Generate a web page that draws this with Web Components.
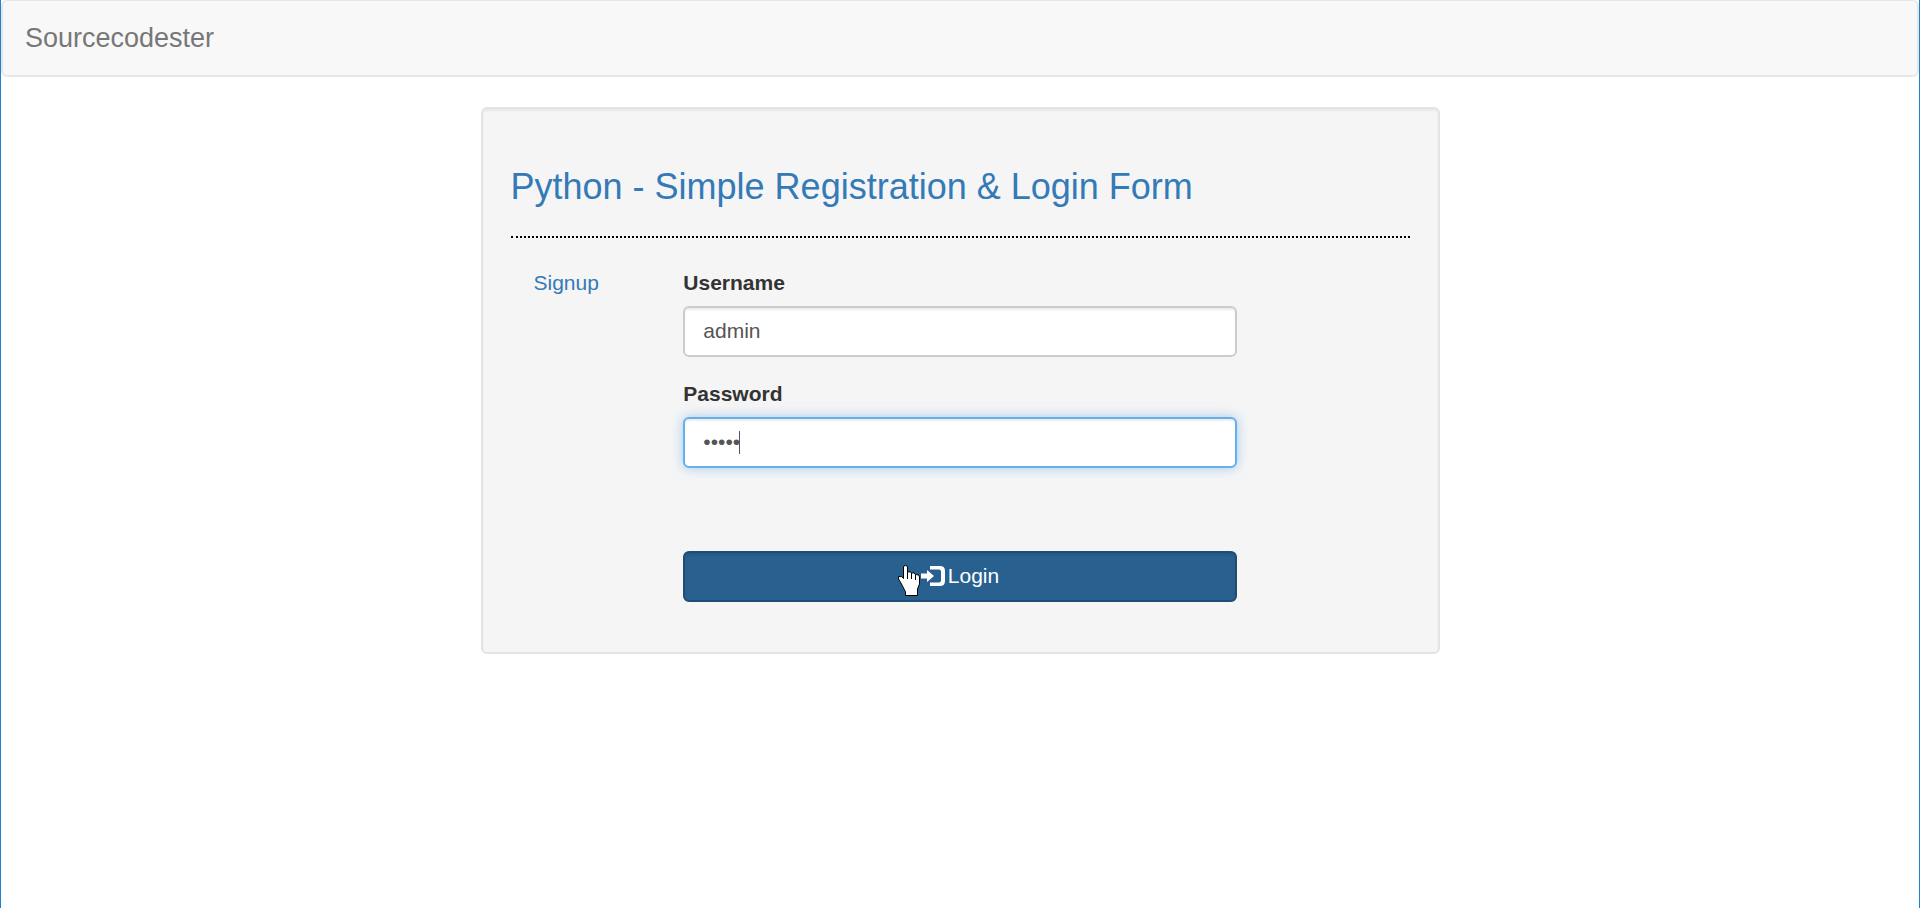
<!DOCTYPE html>
<html lang="en">
<head>
<meta charset="utf-8">
<meta name="viewport" content="width=device-width, initial-scale=1">
<title>Python - Simple Registration &amp; Login Form</title>
<style>
  body { margin: 0; background: #fff; color: #333; font: 21px/30px "Liberation Sans", Arial, sans-serif; }
</style>
</head>
<body>
<app-page>
  <nav-bar slot="nav">Sourcecodester</nav-bar>
  <well-panel>
    <span slot="title">Python - Simple Registration &amp; Login Form</span>
    <side-link slot="side" href="#signup">Signup</side-link>
    <login-form></login-form>
  </well-panel>
</app-page>

<template id="app-page">
  <style>
    :host { display: block; box-sizing: border-box; min-height: 100vh; border: solid #1883d7; border-width: 0 1px; }
    main { box-sizing: border-box; width: 50%; min-width: 620px; margin: 30px auto 0; }
  </style>
  <slot name="nav"></slot>
  <main><slot></slot></main>
</template>

<template id="nav-bar">
  <style>
    :host { display: block; }
    nav { box-sizing: border-box; padding: 22px; border: 2px solid #e7e7e7; border-top-width: 1px; border-radius: 6px; background: #f8f8f8; }
    a { display: block; font-size: 27px; line-height: 30px; color: #777; text-decoration: none; }
  </style>
  <nav><a href="#"><slot></slot></a></nav>
</template>

<template id="well-panel">
  <style>
    :host { display: block; box-sizing: border-box; padding: 28px 28px 50px; border: 2px solid #e3e3e3; border-radius: 6px; background: #f5f5f5; box-shadow: inset 0 2px 2px rgba(0,0,0,.05); }
    h3 { margin: 30px 0 0; font-size: 36px; line-height: 40px; font-weight: 400; color: #337ab7; }
    hr { height: 0; margin: 29px 0 30px; border: 0; border-top: 2px dotted #000; }
    .row { display: grid; grid-template-columns: minmax(0,2fr) minmax(0,8fr) minmax(0,2fr); }
    .col { padding: 0 23px; }
  </style>
  <h3><slot name="title"></slot></h3>
  <hr>
  <div class="row">
    <div class="col"><slot name="side"></slot></div>
    <div class="col"><slot></slot></div>
  </div>
</template>

<template id="side-link">
  <style>
    :host { display: block; }
    a { color: #337ab7; text-decoration: none; }
  </style>
  <a><slot></slot></a>
</template>

<template id="login-form">
  <style>
    :host { display: block; }
    form { margin: 0; }
    .group { margin-bottom: 22px; }
    .group.last { margin-bottom: 83px; }
    label { display: block; margin-bottom: 8px; font-weight: 700; }
    .field { position: relative; }
    input { display: block; box-sizing: border-box; width: 100%; height: 51px; margin: 0; padding: 8px 18px 10px; border: 2px solid #ccc; border-radius: 6px; outline: 0; background: #fff; color: #555; font: inherit; box-shadow: inset 0 2px 2px rgba(0,0,0,.075); }
    input.active { border-color: #66afe9; box-shadow: inset 0 2px 2px rgba(0,0,0,.075), 0 0 12px rgba(102,175,233,.6); }
    .caret { position: absolute; left: 56px; top: 14px; width: 1px; height: 23px; background: #555; }
    button { position: relative; display: flex; align-items: center; justify-content: center; gap: 3px; box-sizing: border-box; width: 100%; height: 51px; padding: 0 0 2px; border: 2px solid #204d74; border-radius: 6px; background: #286090; color: #fff; font: inherit; cursor: pointer; box-shadow: inset 0 2px 2px rgba(0,0,0,.1); }
    .icon { display: block; width: 24px; height: 20px; }
    .pointer { position: absolute; left: calc(50% - 62px); top: 12px; width: 23px; height: 31px; }
  </style>
  <form>
    <div class="group">
      <label for="username">Username</label>
      <div class="field"><input id="username" type="text" value="admin"></div>
    </div>
    <div class="group last">
      <label for="password">Password</label>
      <div class="field"><input id="password" class="active" type="password" value="admin"><span class="caret"></span></div>
    </div>
    <button type="button">
      <svg class="icon" viewBox="0 0 24 20" aria-hidden="true"><path fill="#fff" d="M0 7.500h6V4l7 6-7 6v-3.500H0zM9 0H19q5 0 5 5v10q0 5-5 5H9v-3.500h9q2 0 2-2v-9q0-2-2-2H9z"/></svg>
      <span>Login</span>
      <svg class="pointer" viewBox="0 0 23 31" aria-hidden="true"><path fill="#fff" stroke="#000" d="M5.500 2q0-1.500 2-1.500t2 1.500v5q3-1 4 1 3-1 4 1.500 4-.5 4 2.500v7l-2 5v6.500h-12V27l-4-8-3-5v-2.500h3l2 2zM9.500 7v7M13.500 8v6M17.500 9.500V15"/></svg>
    </button>
  </form>
</template>

<script>
  class TemplateElement extends HTMLElement {
    constructor() {
      super();
      const template = document.getElementById(this.localName);
      this.attachShadow({ mode: "open" }).append(template.content.cloneNode(true));
    }
  }
  customElements.define("app-page", class extends TemplateElement {});
  customElements.define("nav-bar", class extends TemplateElement {});
  customElements.define("well-panel", class extends TemplateElement {});
  customElements.define("side-link", class extends TemplateElement {
    connectedCallback() {
      this.shadowRoot.querySelector("a").href = this.getAttribute("href") || "#";
    }
  });
  customElements.define("login-form", class extends TemplateElement {});
</script>
</body>
</html>
